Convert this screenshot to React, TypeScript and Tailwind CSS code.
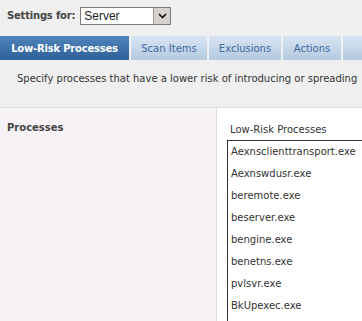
import React from 'react';

const processes = [
  'Aexnsclienttransport.exe',
  'Aexnswdusr.exe',
  'beremote.exe',
  'beserver.exe',
  'bengine.exe',
  'benetns.exe',
  'pvlsvr.exe',
  'BkUpexec.exe',
];

const tabs = ['Scan Items', 'Exclusions', 'Actions'];

export default function App() {
  return (
    <div className="w-[362px] h-[321px] overflow-hidden bg-[#efefef] text-[#333] font-['DejaVu_Sans',sans-serif]">
      {/* settings selector */}
      <div className="flex items-center h-[31px] pl-[7px] gap-[5px]">
        <span className="text-[10px] font-bold text-[#444] tracking-[-0.2px]">Settings for:</span>
        <div className="flex items-center h-[18px] w-[91px] border border-[#7a7a7a] bg-white">
          <span className="flex-1 pl-[3px] text-[12px] text-[#222] font-['Liberation_Sans',sans-serif]">Server</span>
          <div className="w-[17px] h-[16px] bg-[#d6d3ce] border-l border-[#9a9a9a] flex items-center justify-center">
            <svg width="9" height="6" viewBox="0 0 9 6">
              <path d="M1 1 L4.5 4.5 L8 1" stroke="#111" strokeWidth="1.6" fill="none" />
            </svg>
          </div>
        </div>
      </div>

      {/* tabs */}
      <div className="flex h-[24px] mt-[5px] gap-px">
        <div className="w-[129px] flex items-center justify-center bg-gradient-to-b from-[#4f84bb] to-[#2f6199] text-white text-[10px] font-bold tracking-[-0.2px]">
          Low-Risk Processes
        </div>
        {tabs.map((t) => (
          <div
            key={t}
            className={`${t === 'Scan Items' ? 'w-[77px]' : t === 'Exclusions' ? 'w-[73px]' : 'w-[59px]'} flex items-center justify-center bg-gradient-to-b from-[#d9e6f3] to-[#b3c9e0] text-[#3d6b9e] text-[10px] border-l border-[#eef4fa]`}
          >
            {t}
          </div>
        ))}
        <div className="flex-1 bg-gradient-to-b from-[#d9e6f3] to-[#b3c9e0] border-l border-[#eef4fa]" />
      </div>

      {/* description */}
      <div className="h-[48px] pt-[11px] pl-[17px] text-[10px] text-[#333] whitespace-nowrap overflow-hidden border-b border-[#dcdcdc]">
        Specify processes that have a lower risk of introducing or spreading
      </div>

      {/* main panels */}
      <div className="flex h-[213px]">
        <div className="w-[217px] bg-[#f6f2f5] border-r border-[#dedede] pl-[7px] pt-[11px] leading-[14px]">
          <span className="text-[10px] font-bold text-[#444]">Processes</span>
        </div>
        <div className="flex-1 bg-white pl-[10px] pt-[16px]">
          <div className="text-[10px] text-[#333] pl-[3px] leading-[12px]">Low-Risk Processes</div>
          <div className="mt-[4px] border-l border-t border-[#333] h-[200px] pl-[3px] pt-[3px]">
            {processes.map((p) => (
              <div key={p} className="h-[22px] text-[10px] leading-[16px] text-[#333] whitespace-nowrap">
                {p}
              </div>
            ))}
          </div>
        </div>
      </div>
    </div>
  );
}
